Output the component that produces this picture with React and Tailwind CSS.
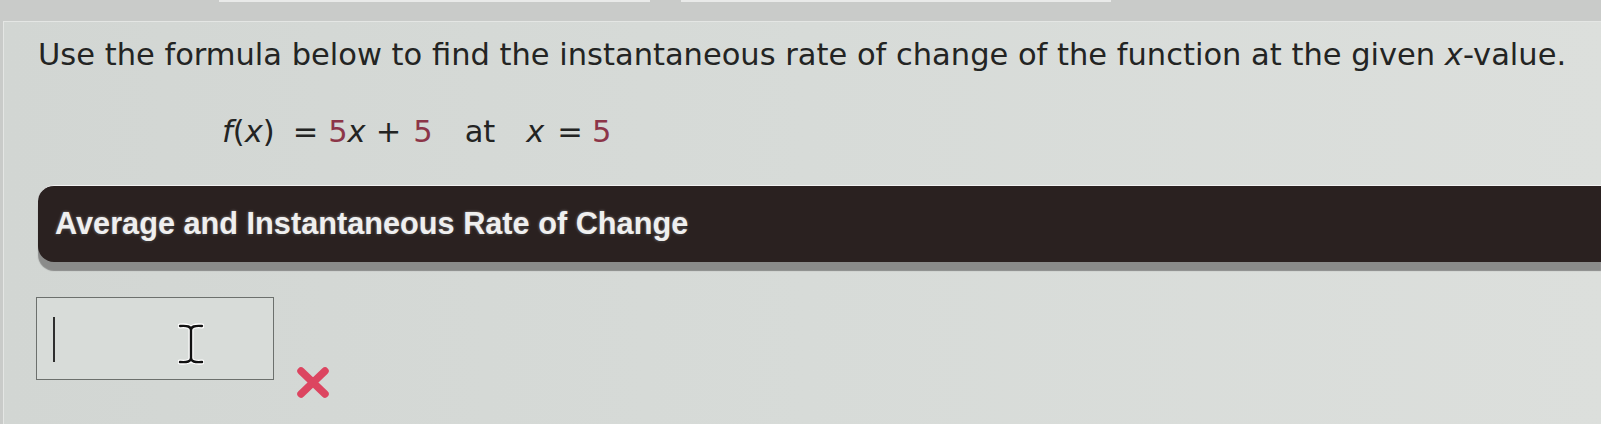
export default function App() {
  const body = { fontFamily: '"DejaVu Sans", Verdana, sans-serif' };

  return (
    <div className="h-[424px] w-full overflow-hidden bg-[#c9cbc9]">
      {/* screen top edge */}
      <div className="flex h-[2px]">
        <div className="w-[219px]" />
        <div className="w-[431px] bg-[#e9eae9]" />
        <div className="w-[31px]" />
        <div className="w-[430px] bg-[#e9eae9]" />
      </div>
      <div className="h-[19px]" />

      <div className="ml-[3px] h-[403px] border-l border-t border-[#e4e6e4] bg-gradient-to-r from-[#d2d6d3] via-[#d7dbd8] to-[#dcdfdc] pb-4" style={body}>
        <p className="ml-[34px] mt-[18px] whitespace-nowrap text-[30.5px] leading-none text-[#232423]">
          Use the formula below to find the instantaneous rate of change of the function at the given <i>x</i>-value.
        </p>

        <div className="ml-[218px] mt-[46px] flex whitespace-nowrap text-[30.5px] leading-none text-[#232423]">
          <span><i>f</i>(<i>x</i>)</span>
          <span className="ml-[18px]">=</span>
          <span className="ml-[10px]"><span className="text-[#8c3548]">5</span><i>x</i></span>
          <span className="ml-[10px]">+</span>
          <span className="ml-[12px] text-[#8c3548]">5</span>
          <span className="ml-[32px]">at</span>
          <span className="ml-[31px]"><i>x</i></span>
          <span className="ml-[13px]">=</span>
          <span className="ml-[9px] text-[#8c3548]">5</span>
        </div>

        <div className="ml-[34px] mt-[38px] flex h-[77px] items-center rounded-l-[16px] border-t border-[#f2f2f2] bg-[#2a2120] pl-[17px] shadow-[0_9px_1px_#8a8b8a]">
          <span
            className="whitespace-nowrap text-[30.7px] font-bold leading-none text-[#efefef] [text-shadow:0_0_3px_rgba(255,255,255,0.45),1px_1px_1px_rgba(0,0,0,0.6)]"
            style={{ fontFamily: '"Liberation Sans", Arial, sans-serif' }}
          >
            Average and Instantaneous Rate of Change
          </span>
        </div>

        <div className="mt-[35px] flex items-start">
          <div className="relative ml-[32px] h-[83px] w-[238px] border-[1.5px] border-[#6c706d] bg-[#d8dcd9]">
            <div className="ml-[16px] mt-[19px] h-[45px] w-[2px] bg-[#2e2e2e]" />
            <svg className="absolute left-[141px] top-[25px]" width="26" height="42" viewBox="0 0 26 42">
              <g fill="none" strokeLinecap="round">
                <path d="M2 3 Q13 2 13 7 Q13 2 24 3 M13 7 V35 M2 39 Q13 40 13 35 Q13 40 24 39" stroke="#ffffff" strokeWidth="5" />
                <path d="M2 3 Q13 2 13 7 Q13 2 24 3 M13 7 V35 M2 39 Q13 40 13 35 Q13 40 24 39" stroke="#111111" strokeWidth="2.4" />
              </g>
            </svg>
          </div>
          <svg className="ml-[22px] mt-[70px]" width="34" height="31" viewBox="0 0 34 31">
            <path d="M5 4 L29 27 M29 4 L5 27" stroke="#dc4560" strokeWidth="7.5" strokeLinecap="round" />
          </svg>
        </div>
      </div>
    </div>
  );
}
